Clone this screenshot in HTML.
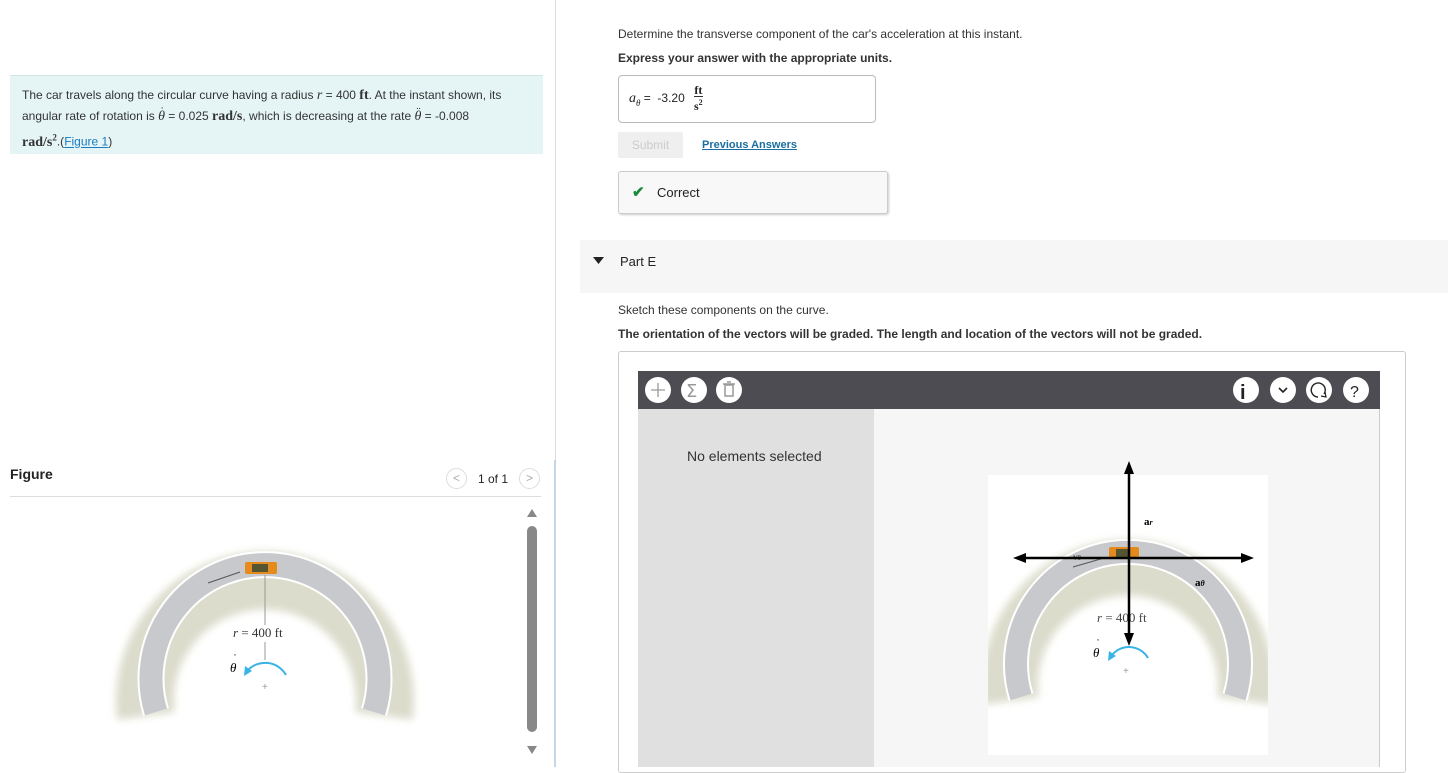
<!DOCTYPE html>
<html><head><meta charset="utf-8"><style>
body{margin:0;width:1448px;height:767px;overflow:hidden;background:#fff;font-family:"Liberation Sans",Arial,sans-serif;color:#222;position:relative}
.a{position:absolute}
.m{font-family:"Liberation Serif",serif}
.th{position:relative;display:inline-block;font-family:"Liberation Serif",serif;font-style:italic;font-size:14px}
.th span{position:absolute;left:2px;top:-6px;font-style:normal;font-size:12px}
</style></head><body>
<div class="a" style="left:10px;top:75px;width:533px;height:78px;background:#e5f5f6;border-top:1px solid #d2e6e8"></div>
<div class="a" style="left:22px;top:85px;width:510px;font-size:12px;line-height:20px;color:#333">The car travels along the circular curve having a radius <i class="m" style="font-size:14px">r</i> = 400 <b class="m" style="font-size:14px">ft</b>. At the instant shown, its angular rate of rotation is <span class="th">θ<span>˙</span></span> = 0.025 <b class="m" style="font-size:14px">rad/s</b>, which is decreasing at the rate <span class="th">θ<span>¨</span></span> = -0.008<br><b class="m" style="font-size:14px">rad/s<sup style="font-size:9px">2</sup></b>.(<a style="color:#1a7bbf;text-decoration:underline">Figure 1</a>)</div>
<div class="a" style="left:555px;top:0;width:1px;height:767px;background:#ddd"></div>
<div class="a" style="left:554px;top:460px;width:2px;height:307px;background:#c5d6e6"></div>
<div class="a" style="left:10px;top:466px;font-size:14px;font-weight:bold">Figure</div>
<div class="a" style="left:10px;top:496px;width:531px;height:1px;background:#ddd"></div>
<div class="a" style="left:446px;top:468px;width:19px;height:19px;border:1px solid #ddd;border-radius:50%;color:#aaa;font-size:12px;text-align:center;line-height:19px">&lt;</div>
<div class="a" style="left:478px;top:472px;font-size:12px">1 of 1</div>
<div class="a" style="left:519px;top:468px;width:19px;height:19px;border:1px solid #ddd;border-radius:50%;color:#aaa;font-size:12px;text-align:center;line-height:19px">&gt;</div>
<div class="a" style="left:527px;top:526px;width:10px;height:206px;background:#888;border-radius:5px"></div>
<svg class="a" style="left:0;top:0" width="1448" height="767">
<defs><filter id="b" filterUnits="userSpaceOnUse" x="0" y="0" width="1448" height="767"><feGaussianBlur stdDeviation="4"/></filter></defs>
<polygon points="527,517 537,517 532,509" fill="#888"/><polygon points="527,746 537,746 532,754" fill="#888"/>
<path d="M146,716 A120,120 0 1 1 384,716" fill="none" stroke="#dcdccc" stroke-width="58" filter="url(#b)"/>
<path d="M156,712 A114,114 0 1 1 374,712" fill="none" stroke="#fff" stroke-width="27"/>
<path d="M156,712 A114,114 0 1 1 374,712" fill="none" stroke="#c8c9cc" stroke-width="23"/>
<rect x="245" y="562" width="32" height="12" fill="#e58a1d" rx="2"/><rect x="252" y="564" width="16" height="8" fill="#553"/>
<line x1="265" y1="575" x2="265" y2="625" stroke="#999"/><line x1="265" y1="642" x2="265" y2="660" stroke="#999"/>
<text x="233" y="637" font-family="Liberation Serif" font-size="13" fill="#333"><tspan font-style="italic">r</tspan> = 400 ft</text>
<path d="M286,675 A24,24 0 0 0 248,670" fill="none" stroke="#39b4e6" stroke-width="2"/><polygon points="244,676 252,671 245,666" fill="#39b4e6"/>
<text x="230" y="672" font-family="Liberation Serif" font-style="italic" font-size="13">θ</text><text x="233" y="662" font-family="Liberation Serif" font-size="12">˙</text>
<text x="262" y="690" font-size="10" fill="#999">+</text>
<path d="M208,583 L240,572" stroke="#555"/>
</svg>
<div class="a" style="left:618px;top:27px;font-size:12px;color:#333">Determine the transverse component of the car's acceleration at this instant.</div>
<div class="a" style="left:618px;top:51px;font-size:12px;font-weight:bold;color:#333">Express your answer with the appropriate units.</div>
<div class="a" style="left:618px;top:75px;width:256px;height:46px;border:1px solid #bbb;border-radius:4px"></div>
<div class="a" style="left:629px;top:91px;font-size:12px"><i class="m" style="font-size:14px">a<sub style="font-size:9px">θ</sub></i> = &nbsp;-3.20</div>
<div class="a m" style="left:694px;top:84px;font-size:12px;font-weight:bold;text-align:center;line-height:12px"><div style="border-bottom:1px solid #333">ft</div>s<sup style="font-size:8px">2</sup></div>
<div class="a" style="left:618px;top:132px;width:65px;height:26px;background:#efefef;color:#ccc;font-size:12px;text-align:center;line-height:26px;border-radius:2px">Submit</div>
<div class="a" style="left:702px;top:139px;font-size:11px;font-weight:bold;color:#1a6fa0;text-decoration:underline">Previous Answers</div>
<div class="a" style="left:618px;top:171px;width:268px;height:41px;border:1px solid #ccc;border-radius:3px;background:#f8f8f8;box-shadow:1px 1px 2px #ccc"></div>
<div class="a" style="left:632px;top:183px;color:#1a8a3a;font-size:15px;font-weight:bold">✔</div>
<div class="a" style="left:657px;top:185px;font-size:13px">Correct</div>
<div class="a" style="left:580px;top:240px;width:868px;height:53px;background:#f6f6f6"></div>
<svg class="a" style="left:593px;top:257px" width="12" height="8"><polygon points="0,0 11,0 5.5,7" fill="#222"/></svg>
<div class="a" style="left:620px;top:254px;font-size:13px">Part E</div>
<div class="a" style="left:618px;top:303px;font-size:12px;color:#333">Sketch these components on the curve.</div>
<div class="a" style="left:618px;top:327px;font-size:12px;font-weight:bold;color:#333">The orientation of the vectors will be graded. The length and location of the vectors will not be graded.</div>
<div class="a" style="left:618px;top:351px;width:786px;height:420px;border:1px solid #ccc;border-radius:3px"></div>
<div class="a" style="left:638px;top:371px;width:742px;height:38px;background:#4c4c52"></div>
<div class="a" style="left:638px;top:409px;width:236px;height:358px;background:#e0e0e0"></div>
<div class="a" style="left:874px;top:409px;width:505px;height:358px;background:#f6f6f6;border-right:1px solid #ccc"></div>
<div class="a" style="left:687px;top:448px;font-size:14px;color:#333">No elements selected</div>
<div class="a" style="left:988px;top:475px;width:280px;height:280px;background:#fff"></div>
<svg class="a" style="left:0;top:0" width="1448" height="767">
<defs><filter id="b2" filterUnits="userSpaceOnUse" x="0" y="0" width="1448" height="767"><feGaussianBlur stdDeviation="4"/></filter><clipPath id="c"><rect x="988" y="475" width="280" height="280"/></clipPath></defs>
<g fill="#fff"><circle cx="658" cy="390" r="13"/><circle cx="694" cy="390" r="13"/><circle cx="729" cy="390" r="13"/>
<circle cx="1246" cy="390" r="13"/><circle cx="1283" cy="390" r="13"/><circle cx="1319" cy="390" r="13"/><circle cx="1356" cy="390" r="13"/></g>
<path d="M658,383 V397 M651,390 H665" stroke="#999" stroke-width="1.3"/>
<text x="686" y="397" font-size="18" fill="#999" font-family="DejaVu Sans">Σ</text>
<rect x="725" y="385" width="8" height="11" fill="none" stroke="#999" stroke-width="1.5"/><path d="M723,384 H735 M727,382 H731" stroke="#999" stroke-width="1.5"/>
<text x="1240" y="399" font-size="20" font-weight="bold" fill="#222" font-family="Liberation Sans">i</text>
<path d="M1279,388 L1283,392 L1287,388" stroke="#222" stroke-width="1.6" fill="none"/>
<path d="M1324,394 A7,7 0 1 0 1318,397" stroke="#222" stroke-width="1.4" fill="none"/><path d="M1321,396 L1326,397 L1325,392" stroke="#222" stroke-width="1.2" fill="none"/>
<text x="1350" y="397" font-size="16" fill="#222">?</text>
<g clip-path="url(#c)">
<path d="M1011,701 A118,118 0 1 1 1245,701" fill="none" stroke="#dcdccc" stroke-width="56" filter="url(#b2)"/>
<path d="M1021,697 A112,112 0 1 1 1235,697" fill="none" stroke="#fff" stroke-width="26"/>
<path d="M1021,697 A112,112 0 1 1 1235,697" fill="none" stroke="#c8c9cc" stroke-width="22"/>
</g>
<rect x="1109" y="547" width="30" height="12" fill="#e58a1d" rx="2"/><rect x="1116" y="549" width="14" height="8" fill="#553"/>
<text x="1097" y="622" font-family="Liberation Serif" font-size="13" fill="#444"><tspan font-style="italic">r</tspan> = 400 ft</text>
<path d="M1148,658 A22,22 0 0 0 1112,655" fill="none" stroke="#39b4e6" stroke-width="2"/><polygon points="1108,661 1116,656 1109,651" fill="#39b4e6"/>
<text x="1093" y="657" font-family="Liberation Serif" font-style="italic" font-size="13">θ</text><text x="1096" y="647" font-family="Liberation Serif" font-size="12">˙</text>
<text x="1123" y="674" font-size="10" fill="#999">+</text>
<text x="1144" y="525" font-family="Liberation Serif" font-weight="bold" font-size="11">a<tspan font-size="8" font-style="italic">r</tspan></text>
<text x="1195" y="586" font-family="Liberation Serif" font-weight="bold" font-size="11">a<tspan font-size="8" font-style="italic">θ</tspan></text>
<text x="1073" y="560" font-family="Liberation Serif" font-weight="bold" font-size="9" fill="#555">v<tspan font-size="7">θ</tspan></text>
<path d="M1073,567 L1104,558" stroke="#555"/>
<g stroke="#000" stroke-width="2.5"><line x1="1129" y1="470" x2="1129" y2="638"/><line x1="1022" y1="558" x2="1244" y2="558"/></g>
<polygon points="1129,461 1124,474 1134,474" fill="#000"/><polygon points="1129,646 1124,633 1134,633" fill="#000"/>
<polygon points="1013,558 1026,553 1026,563" fill="#000"/><polygon points="1254,558 1241,553 1241,563" fill="#000"/>
</svg>
</body></html>
